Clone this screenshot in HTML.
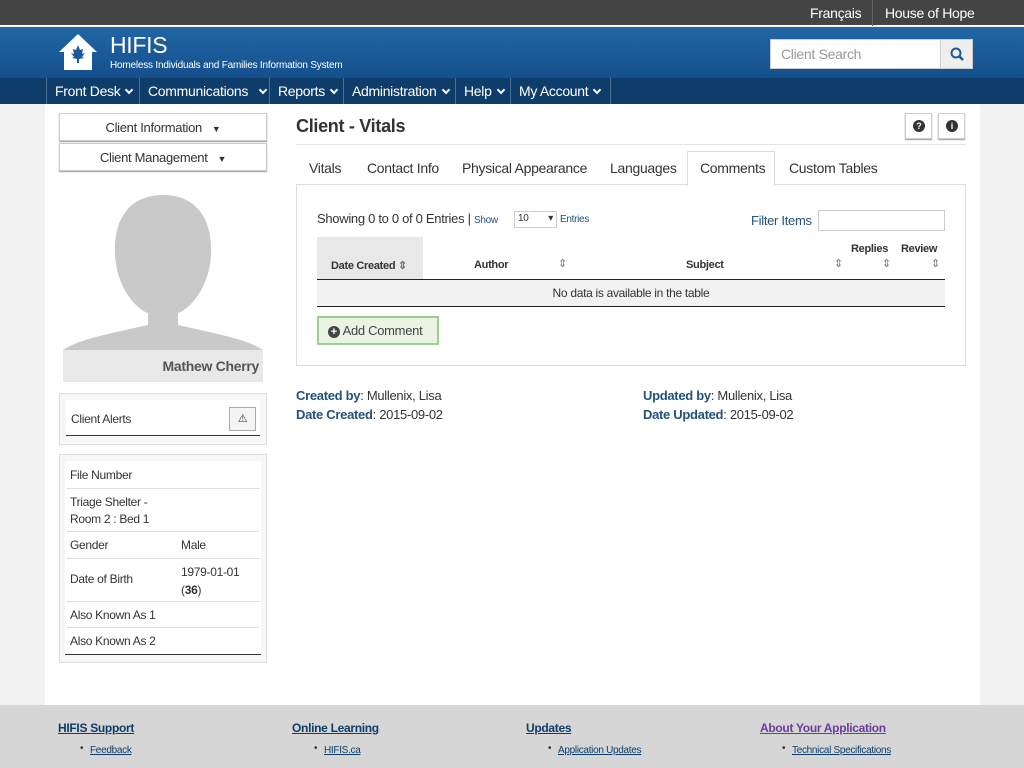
<!DOCTYPE html>
<html><head><meta charset="utf-8"><style>
*{box-sizing:border-box;margin:0;padding:0}
body{width:1024px;height:768px;font-family:"Liberation Sans",sans-serif;background:#f2f2f2;position:relative;overflow:hidden;font-size:13px;color:#333;letter-spacing:-0.3px}
.abs{position:absolute;white-space:nowrap}
#top{left:0;top:0;width:1024px;height:26px;background:#444;border-bottom:1px solid #fff}
#top span{position:absolute;top:5px;color:#fff;font-size:14px}
#ban{left:0;top:27px;width:1024px;height:51px;background:linear-gradient(#2166a6,#154f8c)}
#nav{left:0;top:78px;width:1024px;height:26px;background:#0f3d6b}
#nav div{position:absolute;top:0;height:26px;border-left:1px solid #4a6f95;color:#fff;font-size:14px;padding:5px 8px;white-space:nowrap}
#main{left:45px;top:104px;width:935px;height:601px;background:#fff}
.btn{position:absolute;border:1px solid #ccc;background:#fff;box-shadow:0 1px 1px #999;font-size:13px;text-align:center;white-space:nowrap}
.tab{position:absolute;top:160px;font-size:14px;color:#333}
.lbl{color:#23527c;font-weight:bold}
#foot{left:0;top:705px;width:1024px;height:63px;background:#d6d6d6}
#foot a{position:absolute;color:#0f3d6b;font-size:12px;text-decoration:underline;white-space:nowrap}
.row{position:absolute;left:66px;width:194px;border-bottom:1px solid #ddd;font-size:12px;color:#333}
.chev{display:inline-block;width:6px;height:6px;border-right:2px solid #fff;border-bottom:2px solid #fff;transform:rotate(45deg);margin:0 0 3px 6px}
.ic{position:absolute;top:6px;left:7px;width:12px;height:12px;border-radius:50%;background:#333;color:#fff;font-size:9px;font-weight:bold;line-height:12px;text-align:center;letter-spacing:0}
</style></head><body>
<div id="top" class="abs"><span style="left:810px">Français</span><div class="abs" style="left:872px;top:0;width:1px;height:26px;background:#666"></div><span style="left:885px">House of Hope</span></div>
<div id="ban" class="abs">
<svg class="abs" style="left:58px;top:6px" width="40" height="38" viewBox="0 0 40 38"><path d="M20 1L1 19h5v18h28V19h5z" fill="#fff"/><path d="M20 12l2 5 3-1-1 5 3-1-3 4 2 1-5 1v4h-2v-4l-5-1 2-1-3-4 3 1-1-5 3 1z" fill="#1b5b99"/></svg>
<div class="abs" style="left:110px;top:5px;color:#fff;font-size:23px">HIFIS</div>
<div class="abs" style="left:110px;top:33px;color:#fff;font-size:10px;letter-spacing:-0.2px">Homeless Individuals and Families Information System</div>
<div class="abs" style="left:770px;top:12px;width:171px;height:30px;background:#fff;border:1px solid #ccc;color:#999;font-size:14px;padding:6px 10px">Client Search</div>
<div class="abs" style="left:940px;top:12px;width:33px;height:30px;background:#eee;border:1px solid #ccc"><svg style="margin:7px 9px" width="14" height="14"><circle cx="6" cy="6" r="4.5" stroke="#1b5b99" stroke-width="2" fill="none"/><path d="M9 9l4 4" stroke="#1b5b99" stroke-width="2.5"/></svg></div>
</div>
<div id="nav" class="abs">
<div style="left:46px;width:93px">Front Desk<span class="chev"></span></div><div style="left:139px;width:130px">Communications<span class="chev" style="margin-left:12px"></span></div><div style="left:269px;width:74px">Reports<span class="chev"></span></div><div style="left:343px;width:112px">Administration<span class="chev"></span></div><div style="left:455px;width:55px">Help<span class="chev"></span></div><div style="left:510px;width:100px">My Account<span class="chev"></span></div><div style="left:610px;padding:0"></div>
</div>
<div id="main" class="abs"></div>
<div class="btn" style="left:59px;top:113px;width:208px;height:28px;padding-top:6px">Client Information &nbsp; <span style="font-size:9px">▼</span></div>
<div class="btn" style="left:59px;top:143px;width:208px;height:28px;padding-top:6px">Client Management &nbsp; <span style="font-size:9px">▼</span></div>
<div class="abs" style="left:59px;top:178px;width:208px;height:206px;background:#fff"></div>
<svg class="abs" style="left:63px;top:195px" width="200" height="155"><path d="M100 0C70 0 50 20 52 60 C54 95 75 115 85 118 L85 130 C40 140 15 145 0 155 L200 155 C185 145 160 140 115 130 L115 118 C125 115 146 95 148 60 C150 20 130 0 100 0z" fill="#c9c9c9"/></svg>
<div class="abs" style="left:63px;top:350px;width:200px;height:32px;background:#e8e8e8;text-align:right;padding:8px 4px;font-weight:bold;font-size:14px;color:#555">Mathew Cherry</div>
<div class="abs" style="left:59px;top:393px;width:208px;height:52px;border:1px solid #ddd;background:#f7f7f7"><div style="position:absolute;left:6px;top:6px;width:194px;height:36px;background:#fff;border-bottom:1px solid #333;padding:12px 5px;font-size:12px">Client Alerts</div><div style="position:absolute;left:169px;top:13px;width:27px;height:24px;border:1px solid #aaa;background:#f4f4f4;text-align:center;font-size:11px;padding-top:4px">⚠</div></div>
<div class="abs" style="left:59px;top:454px;width:208px;height:209px;border:1px solid #ddd;background:#f7f7f7"></div>
<div class="abs" style="left:65px;top:461px;width:196px;height:194px;background:#fff;border-bottom:1px solid #333"></div>
<div class="row" style="top:461px;height:28px;padding:7px 4px">File Number</div>
<div class="row" style="top:489px;height:43px;padding:5px 4px;line-height:17px">Triage Shelter -<br>Room 2 : Bed 1</div>
<div class="row" style="top:532px;height:27px;padding:6px 4px">Gender<span style="position:absolute;left:115px">Male</span></div>
<div class="row" style="top:559px;height:43px;padding:13px 4px">Date of Birth<span style="position:absolute;left:115px;top:4px;line-height:18px">1979-01-01<br>(<b>36</b>)</span></div>
<div class="row" style="top:602px;height:26px;padding:6px 4px">Also Known As 1</div>
<div class="row" style="top:628px;height:26px;padding:6px 4px;border:none">Also Known As 2</div>

<div class="abs" style="left:296px;top:116px;font-size:18px;font-weight:bold;color:#333">Client - Vitals</div>
<div class="btn" style="left:905px;top:113px;width:27px;height:26px"><span class="ic">?</span></div>
<div class="btn" style="left:938px;top:113px;width:27px;height:26px"><span class="ic">i</span></div>
<div class="abs" style="left:296px;top:144px;width:670px;height:1px;background:#e5e5e5"></div>
<div class="abs" style="left:296px;top:184px;width:670px;height:182px;border:1px solid #ddd;background:#fff"></div>
<div class="abs" style="left:687px;top:151px;width:88px;height:35px;border:1px solid #ddd;border-bottom:none;background:#fff"></div>
<div class="tab" style="left:309px">Vitals</div><div class="tab" style="left:367px">Contact Info</div><div class="tab" style="left:462px">Physical Appearance</div><div class="tab" style="left:610px">Languages</div><div class="tab" style="left:700px">Comments</div><div class="tab" style="left:789px">Custom Tables</div>
<div class="abs" style="left:317px;top:211px;font-size:13px">Showing 0 to 0 of 0 Entries | <span style="font-size:10px;color:#23527c">Show</span></div>
<div class="abs" style="left:514px;top:211px;width:43px;height:17px;border:1px solid #ccc;font-size:10px;padding:1px 3px">10 <span style="float:right">▾</span></div>
<div class="abs" style="left:560px;top:214px;font-size:10px;color:#23527c">Entries</div>
<div class="abs" style="left:751px;top:213px;font-size:13px;color:#23527c">Filter Items</div>
<div class="abs" style="left:818px;top:210px;width:127px;height:21px;border:1px solid #ccc"></div>
<div class="abs" style="left:317px;top:237px;width:106px;height:42px;background:#e8e8e8"></div>
<div class="abs" style="left:331px;top:259px;font-size:11px;font-weight:bold">Date Created <span style="color:#777">⇕</span></div>
<div class="abs" style="left:474px;top:259px;font-size:11px;font-weight:bold">Author</div>
<div class="abs" style="left:558px;top:257px;font-size:11px;color:#777">⇕</div>
<div class="abs" style="left:686px;top:259px;font-size:11px;font-weight:bold">Subject</div>
<div class="abs" style="left:834px;top:257px;font-size:11px;color:#777">⇕</div>
<div class="abs" style="left:851px;top:243px;font-size:11px;font-weight:bold">Replies</div>
<div class="abs" style="left:882px;top:257px;font-size:11px;color:#777">⇕</div>
<div class="abs" style="left:901px;top:243px;font-size:11px;font-weight:bold">Review</div>
<div class="abs" style="left:931px;top:257px;font-size:11px;color:#777">⇕</div>
<div class="abs" style="left:317px;top:279px;width:628px;height:28px;background:#f2f2f2;border-top:1px solid #222;border-bottom:1px solid #222;text-align:center;font-size:12px;padding-top:6px">No data is available in the table</div>
<div class="abs" style="left:317px;top:316px;width:122px;height:29px;border:2px solid #9ccf8c;background:#eaf3e4;font-size:13px;padding:5px 9px;color:#444"><span style="display:inline-block;width:12px;height:12px;border-radius:50%;background:#444;color:#fff;font-size:11px;line-height:12px;text-align:center;font-weight:bold;letter-spacing:0">+</span> Add Comment</div>
<div class="abs" style="left:296px;top:386px;font-size:13px;line-height:19px"><span class="lbl">Created by</span>: Mullenix, Lisa<br><span class="lbl">Date Created</span>: 2015-09-02</div>
<div class="abs" style="left:643px;top:386px;font-size:13px;line-height:19px"><span class="lbl">Updated by</span>: Mullenix, Lisa<br><span class="lbl">Date Updated</span>: 2015-09-02</div>
<div id="foot" class="abs">
<a style="left:58px;top:16px;font-weight:bold">HIFIS Support</a><a style="left:90px;top:40px;font-size:10px">Feedback</a>
<a style="left:292px;top:16px;font-weight:bold">Online Learning</a><a style="left:324px;top:40px;font-size:10px">HIFIS.ca</a>
<a style="left:526px;top:16px;font-weight:bold">Updates</a><a style="left:558px;top:40px;font-size:10px">Application Updates</a>
<a style="left:760px;top:16px;font-weight:bold;color:#6a3d9a">About Your Application</a><a style="left:792px;top:40px;font-size:10px">Technical Specifications</a>
<span class="abs" style="left:80px;top:38px;font-size:10px">•</span><span class="abs" style="left:314px;top:38px;font-size:10px">•</span><span class="abs" style="left:548px;top:38px;font-size:10px">•</span><span class="abs" style="left:782px;top:38px;font-size:10px">•</span>
</div>
</body></html>
